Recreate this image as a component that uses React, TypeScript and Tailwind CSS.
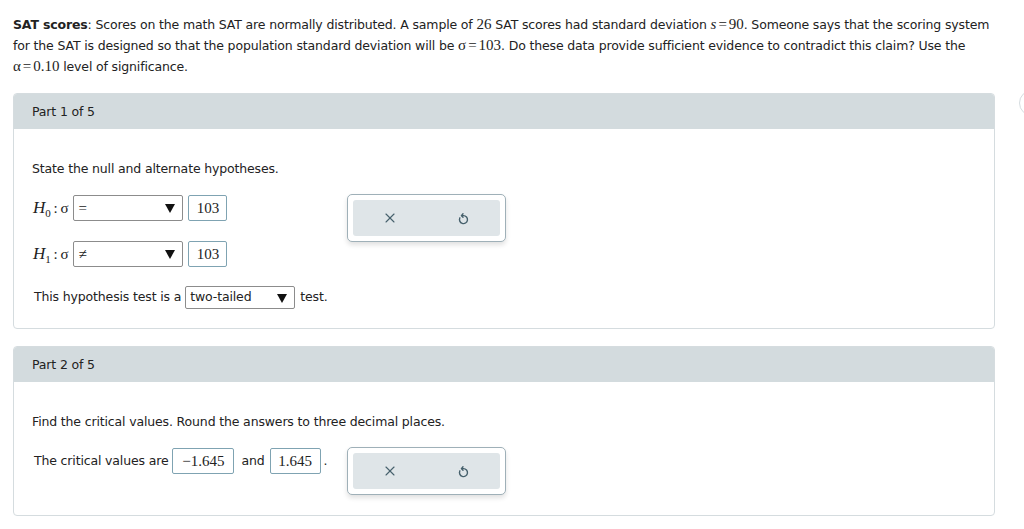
import { X } from 'lucide-react'
import type { ReactNode } from 'react'

const sans = "font-['DejaVu_Sans','Verdana',sans-serif]"
const serif = "font-['Liberation_Serif','Times_New_Roman',serif]"

function M({ children, italic }: { children: ReactNode; italic?: boolean }) {
  return <span className={`${serif} text-[15px] tracking-normal ${italic ? 'italic' : ''}`}>{children}</span>
}

function Eq() {
  return <span className={`${serif} text-[15px] mx-[2px]`}>=</span>
}

function Caret() {
  return (
    <svg width="10" height="10" viewBox="0 0 10 10" className="shrink-0">
      <polygon points="0,1 10,1 5,10" fill="#111" />
    </svg>
  )
}

function UndoIcon() {
  return (
    <svg width="13" height="14" viewBox="0 0 13 14" fill="none" stroke="currentColor" strokeWidth="1.4" strokeLinecap="round" strokeLinejoin="round">
      <path d="M4.6 4.6 H6.5 A4 4 0 1 1 2.9 6.8" />
      <path d="M6 2.8 L4.4 4.6 L6 6.3" />
    </svg>
  )
}

function Select({ value, w, h, serifValue }: { value: string; w: string; h: string; serifValue?: boolean }) {
  return (
    <div className={`flex items-center justify-between border border-[#8c8c8c] rounded-[2px] bg-white pl-[4px] pr-[7px] ${w} ${h}`}>
      <span className={serifValue ? `${serif} text-[15px]` : ''}>{value}</span>
      <Caret />
    </div>
  )
}

function NumBox({ value, w }: { value: string; w: string }) {
  return (
    <div className={`flex items-center justify-center border border-[#7fa3b2] rounded-[2px] bg-white h-[26px] ${w} ${serif} text-[15px] tracking-normal`}>
      {value}
    </div>
  )
}

function ActionPanel() {
  return (
    <div className="w-[159px] h-[48px] border border-[#9fb0b8] rounded-[5px] bg-white p-[5px] shadow-[0_3px_5px_rgba(0,0,0,0.12)]">
      <div className="grid grid-cols-2 h-full bg-[#dfe5e8] rounded-[3px] text-[#46606c]">
        <div className="flex items-center justify-center">
          <X size={16} strokeWidth={1.6} />
        </div>
        <div className="flex items-center justify-center">
          <UndoIcon />
        </div>
      </div>
    </div>
  )
}

function Hyp({ sub, op }: { sub: string; op: string }) {
  return (
    <div className="flex items-center h-[26px]">
      <span className={`${serif} italic text-[17px] ml-px`}>H</span>
      <span className={`${serif} text-[11px] mt-[10px]`}>{sub}</span>
      <span className={`${serif} text-[15px] ml-[3px]`}>:</span>
      <span className={`${serif} text-[15px] ml-[3px] mr-[5px]`}>σ</span>
      <Select value={op} w="w-[110px]" h="h-[26px]" serifValue />
      <div className="ml-[5px]">
        <NumBox value="103" w="w-[39px]" />
      </div>
    </div>
  )
}

function Card({ part, children }: { part: string; children: ReactNode }) {
  return (
    <section className="w-[982px] border border-[#d5dcdf] rounded-[4px] overflow-hidden bg-white">
      <div className="h-[35px] bg-[#d3dbde] flex items-center pl-[18px] pt-px">{part}</div>
      <div className="pl-[18px]">{children}</div>
    </section>
  )
}

export default function App() {
  return (
    <div className={`relative w-[1024px] h-[529px] overflow-hidden bg-white text-[#222] ${sans} text-[12.5px] tracking-[-0.15px]`}>
      <div className="pl-[13px] pt-[14px]">
        <div className="leading-[21px] whitespace-nowrap">
          <div>
            <b>SAT scores</b>: Scores on the math SAT are normally distributed. A sample of <M>26</M> SAT scores had standard deviation <M italic>s</M><Eq /><M>90</M>. Someone says that the scoring system
          </div>
          <div>
            for the SAT is designed so that the population standard deviation will be <M>σ</M><Eq /><M>103</M>. Do these data provide sufficient evidence to contradict this claim? Use the
          </div>
          <div>
            <M>α</M><Eq /><M>0.10</M> level of significance.
          </div>
        </div>

        <div className="mt-[16px]">
          <Card part="Part 1 of 5">
            <div className="pt-[29px] pb-[19px]">
              <div className="leading-[21px]">State the null and alternate hypotheses.</div>
              <div className="flex items-start mt-[15px]">
                <div className="w-[315px] flex flex-col gap-[20px] pt-px">
                  <Hyp sub="0" op="=" />
                  <Hyp sub="1" op="≠" />
                </div>
                <ActionPanel />
              </div>
              <div className="flex items-center mt-[19px] pl-[2px]">
                <span>This hypothesis test is a</span>
                <div className="ml-[4px] mr-[5px]">
                  <Select value="two-tailed" w="w-[110px]" h="h-[23px]" />
                </div>
                <span>test.</span>
              </div>
            </div>
          </Card>
        </div>

        <div className="mt-[17px]">
          <Card part="Part 2 of 5">
            <div className="pt-[29px] pb-[20px]">
              <div className="leading-[21px]">Find the critical values. Round the answers to three decimal places.</div>
              <div className="flex items-start mt-[15px]">
                <div className="w-[315px] flex items-center pl-[2px] h-[28px]">
                  <span>The critical values are</span>
                  <div className="ml-[4px] mr-[7px]">
                    <NumBox value="−1.645" w="w-[62px]" />
                  </div>
                  <span>and</span>
                  <div className="ml-[5px] mr-[3px]">
                    <NumBox value="1.645" w="w-[51px]" />
                  </div>
                  <span>.</span>
                </div>
                <ActionPanel />
              </div>
            </div>
          </Card>
        </div>
      </div>

      <div className="absolute left-[1019px] top-[90px] w-[26px] h-[26px] rounded-full border border-[#d5dcdf] bg-white" />
    </div>
  )
}
